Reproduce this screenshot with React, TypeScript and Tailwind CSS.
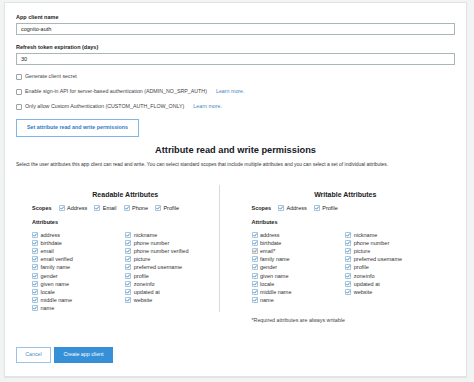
import type { ReactNode } from 'react';

const readableLeft = ['address', 'birthdate', 'email', 'email verified', 'family name', 'gender', 'given name', 'locale', 'middle name', 'name'];
const readableRight = ['nickname', 'phone number', 'phone number verified', 'picture', 'preferred username', 'profile', 'zoneinfo', 'updated at', 'website'];
const writableLeft = ['address', 'birthdate', 'email*', 'family name', 'gender', 'given name', 'locale', 'middle name', 'name'];
const writableRight = ['nickname', 'phone number', 'picture', 'preferred username', 'profile', 'zoneinfo', 'updated at', 'website'];

function Check({ disabled = false }: { disabled?: boolean }) {
  return (
    <svg width="6" height="6" viewBox="0 0 12 12" className="shrink-0">
      <rect x="0.75" y="0.75" width="10.5" height="10.5" rx="1.5" fill={disabled ? '#eef0f1' : '#fff'} stroke={disabled ? '#9aa5ad' : '#6fa8d9'} strokeWidth="1.5" />
      <path d="M3 6.2 L5.2 8.4 L9.2 3.6" fill="none" stroke={disabled ? '#6b7780' : '#3a6d9c'} strokeWidth="1.6" strokeLinecap="round" strokeLinejoin="round" />
    </svg>
  );
}

function Box() {
  return <span className="w-[6px] h-[6px] shrink-0 border border-[#98a3a8] rounded-[1px] bg-white" />;
}

function Item({ label }: { label: string }) {
  return (
    <div className="h-[8.1px] flex items-center gap-[2.5px] leading-[8px]">
      <Check disabled={label === 'email*'} />
      <span>{label}</span>
    </div>
  );
}

function Scope({ label }: { label: string }) {
  return (
    <div className="flex items-center gap-[2.5px]">
      <Check />
      <span>{label}</span>
    </div>
  );
}

function Column({ items }: { items: string[] }) {
  return <div className="w-1/2 flex flex-col">{items.map((a) => <Item key={a} label={a} />)}</div>;
}

function Section({ title, scopes, left, right, children, divider }: {
  title: string; scopes: string[]; left: string[]; right: string[]; children?: ReactNode; divider?: boolean;
}) {
  return (
    <div className={`mx-4 pt-[5px] ${divider ? 'border-r border-[#d5dbdb]' : ''}`}>
      <p className="text-center font-bold text-[7px] leading-[9px] text-[#222]">{title}</p>
      <div className="mt-[5px] h-[8px] flex items-center gap-[7px]">
        <span className="font-bold">Scopes</span>
        {scopes.map((s) => <Scope key={s} label={s} />)}
      </div>
      <p className="mt-[6px] h-[8px] leading-[8px] font-bold">Attributes</p>
      <div className="mt-[5px] flex text-[5.5px] text-[#333]">
        <Column items={left} />
        <Column items={right} />
      </div>
      {children}
    </div>
  );
}

export default function App() {
  return (
    <div className="min-h-screen bg-[#f2f3f3] pt-[2px] pl-[4px]" style={{ fontFamily: '"Liberation Sans", Arial, sans-serif' }}>
      <div className="w-[463px] h-[375px] bg-white border border-[#e1e4e4] shadow-[0_1px_1px_rgba(0,0,0,0.06)] px-[11px] pt-[10px] text-[5.5px] text-[#222]">
        <p className="h-[8px] leading-[8px] font-bold">App client name</p>
        <div className="mt-[2px] h-[12px] border border-[#aab7b8] flex items-center px-[4px] text-[5.5px]">cognito-auth</div>

        <p className="mt-[8px] h-[8px] leading-[8px] font-bold">Refresh token expiration (days)</p>
        <div className="mt-[2px] h-[12px] border border-[#aab7b8] flex items-center px-[4px] text-[5.5px]">30</div>

        <div className="mt-[8px] h-[8px] flex items-center gap-[3px] text-[5.3px] text-[#444]">
          <Box />
          <span>Generate client secret</span>
        </div>
        <div className="mt-[7px] h-[8px] flex items-center gap-[3px] text-[5.3px] text-[#444]">
          <Box />
          <span>Enable sign-in API for server-based authentication (ADMIN_NO_SRP_AUTH)</span>
          <a className="ml-[6px] text-[#3f86c6]">Learn more.</a>
        </div>
        <div className="mt-[7px] h-[8px] flex items-center gap-[3px] text-[5.3px] text-[#444]">
          <Box />
          <span>Only allow Custom Authentication (CUSTOM_AUTH_FLOW_ONLY)</span>
          <a className="ml-[6px] text-[#3f86c6]">Learn more.</a>
        </div>

        <button className="mt-[8px] w-[123px] h-[18px] border border-[#7fb6e3] text-[#2b7bc4] font-bold text-[5.3px] flex items-center justify-center">
          Set attribute read and write permissions
        </button>

        <h2 className="mt-[7px] h-[12px] leading-[12px] text-center font-bold text-[9.25px] text-[#16191f]">
          Attribute read and write permissions
        </h2>
        <p className="mt-[5px] h-[7px] leading-[7px] text-[4.95px] text-[#333] whitespace-nowrap">
          Select the user attributes this app client can read and write. You can select standard scopes that include multiple attributes and you can select a set of individual attributes.
        </p>

        <div className="mt-[17px] grid grid-cols-2 items-start">
          <Section title="Readable Attributes" scopes={['Address', 'Email', 'Phone', 'Profile']} left={readableLeft} right={readableRight} divider />
          <Section title="Writable Attributes" scopes={['Address', 'Profile']} left={writableLeft} right={writableRight}>
            <p className="mt-[12px] h-[8px] leading-[8px] text-[5.3px] text-[#444]">*Required attributes are always writable</p>
          </Section>
        </div>

        <div className="mt-[23px] flex gap-[3px]">
          <button className="w-[35px] h-[16px] border border-[#9cc3e5] text-[#4a8cc8] text-[5.3px] flex items-center justify-center">Cancel</button>
          <button className="w-[59px] h-[16px] bg-[#3590d8] text-white text-[5.3px] flex items-center justify-center">Create app client</button>
        </div>
      </div>
    </div>
  );
}
